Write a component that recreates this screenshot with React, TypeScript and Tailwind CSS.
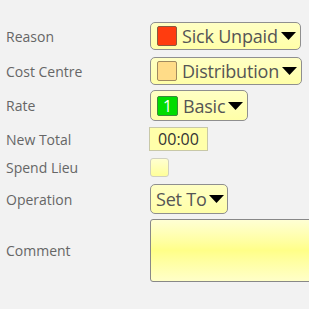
import React from "react";

const font = { fontFamily: '"Open Sans", "Liberation Sans", sans-serif' };

function Caret() {
  return (
    <svg width="15" height="8" viewBox="0 0 15 8" className="shrink-0">
      <path d="M0 0H15L7.5 8Z" fill="#000" />
    </svg>
  );
}

function Select({
  width,
  height,
  swatch,
  label,
}: {
  width: string;
  height: string;
  swatch?: React.ReactNode;
  label: string;
}) {
  return (
    <div
      className={`${width} ${height} flex items-center rounded-[5px] border border-[#8f8f8f] bg-gradient-to-b from-[#ffffc4] to-[#ffffa8] pl-[6px] pr-[4px]`}
    >
      {swatch}
      <span className="ml-[5px] min-w-0 flex-1 whitespace-nowrap text-[18px] leading-none tracking-[-0.2px] text-[#555]">
        {label}
      </span>
      <Caret />
    </div>
  );
}

function Row({
  label,
  className,
  children,
}: {
  label: string;
  className?: string;
  children: React.ReactNode;
}) {
  return (
    <div className={`flex items-center ${className ?? ""}`}>
      <div className="w-[144px] shrink-0 text-[14px] text-[#666]">{label}</div>
      {children}
    </div>
  );
}

export default function App() {
  return (
    <div className="h-[309px] w-[309px] overflow-hidden bg-[#f2f2f2] pl-[6px] pt-[22px]" style={font}>
      <Row label="Reason">
        <Select
          width="w-[151px]"
          height="h-[28px]"
          label="Sick Unpaid"
          swatch={<span className="h-[20px] w-[20px] shrink-0 rounded-[2px] border border-[#8a5a40] bg-[#ff3c0f]" />}
        />
      </Row>
      <Row label="Cost Centre" className="mt-[7px]">
        <Select
          width="w-[152px]"
          height="h-[28px]"
          label="Distribution"
          swatch={<span className="h-[20px] w-[20px] shrink-0 rounded-[2px] border border-[#a08a60] bg-[#ffdc88]" />}
        />
      </Row>
      <Row label="Rate" className="mt-[5px]">
        <Select
          width="w-[98px]"
          height="h-[31px]"
          label="Basic"
          swatch={
            <span className="flex h-[20px] w-[21px] shrink-0 items-center justify-center rounded-[2px] border border-[#3a8a3a] bg-[#00dc00] text-[16px] leading-none text-white">
              1
            </span>
          }
        />
      </Row>
      <Row label="New Total" className="mt-[6px]">
        <div className="-ml-px flex h-[24px] w-[59px] items-center justify-center border border-[#c8c8a8] bg-[#ffffaa] text-[16px] text-[#333]">
          00:00
        </div>
      </Row>
      <Row label="Spend Lieu" className="mt-[6px]">
        <div className="h-[19px] w-[19px] rounded-[3px] border border-[#d0d0c0] bg-gradient-to-b from-[#ffffd0] to-[#ffff99]" />
      </Row>
      <Row label="Operation" className="mt-[6px]">
        <div className="flex h-[30px] w-[78px] items-center rounded-[5px] border border-[#8f8f8f] bg-gradient-to-b from-[#ffffc4] to-[#ffffa8] pl-[5px] pr-[3px]">
          <span className="min-w-0 flex-1 whitespace-nowrap text-[18px] leading-none tracking-[-0.2px] text-[#555]">
            Set To
          </span>
          <Caret />
        </div>
      </Row>
      <Row label="Comment" className="mt-[5px]">
        <div className="h-[63px] w-[170px] shrink-0 rounded-[3px] border border-[#888] bg-gradient-to-b from-[#ffffd4] via-[#ffff88] to-[#ffffc8]" />
      </Row>
    </div>
  );
}
